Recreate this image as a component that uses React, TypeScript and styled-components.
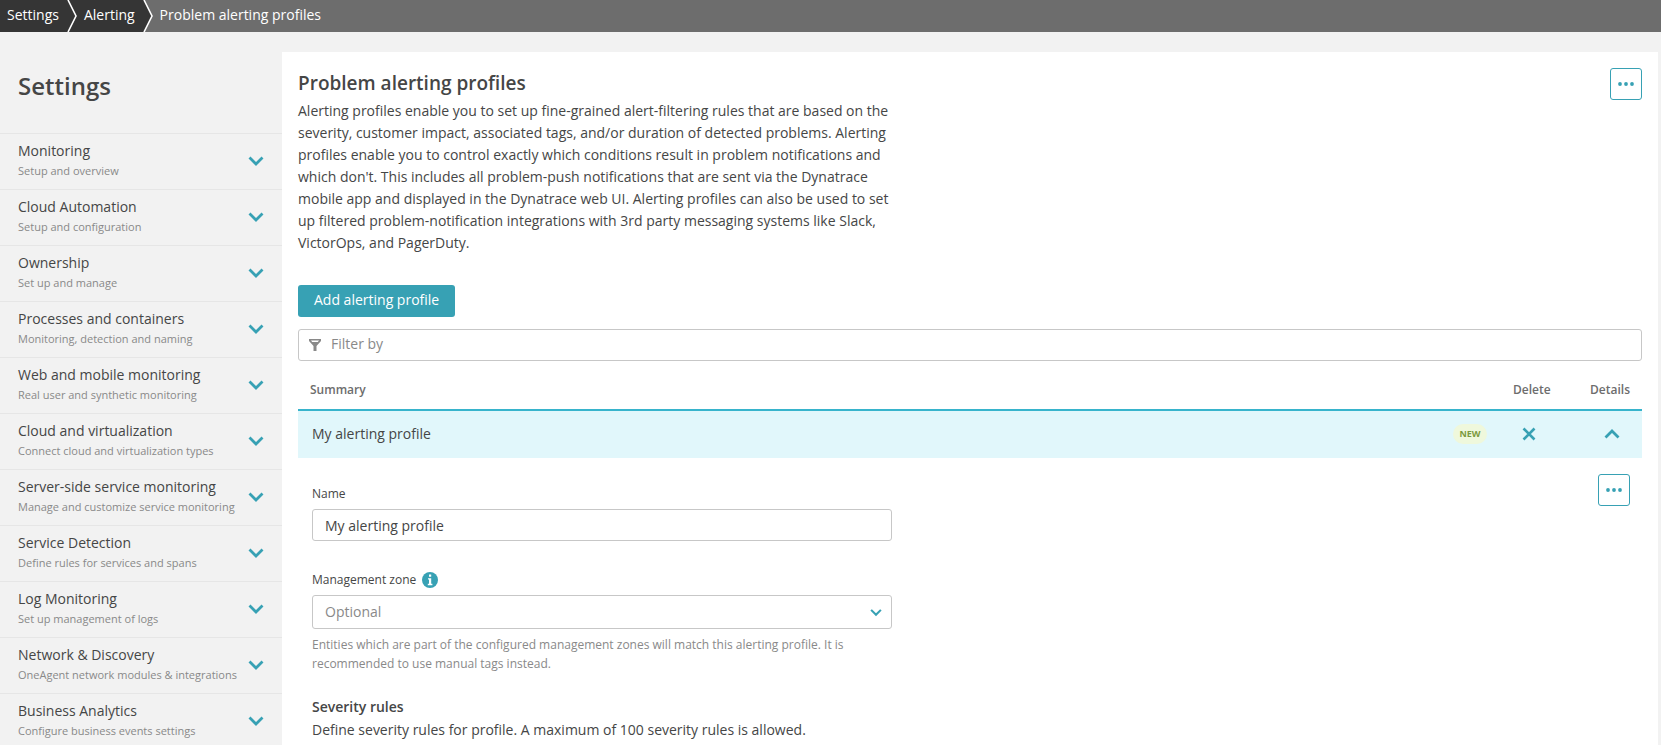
import React from 'react';
import styled, { createGlobalStyle } from 'styled-components';

const GlobalStyle = createGlobalStyle`
  * { box-sizing: border-box; }
  html { scrollbar-width: none; }
  body {
    margin: 0;
    background: #f2f2f2;
    color: #454646;
    font: 400 14px/22px 'Open Sans', 'Noto Sans', sans-serif;
  }
  button, input, select { font: inherit; color: inherit; }
`;

const Page = styled.div`
  height: 100vh;
  display: flex;
  flex-direction: column;
  overflow: hidden;
`;

const Breadcrumbs = styled.nav`
  flex: none;
  display: flex;
  height: 32px;
  background: #6d6d6d;
  color: #fff;
`;

const Crumb = styled.a<{ $current?: boolean }>`
  display: flex;
  align-items: center;
  padding: 0 8px 2px 7px;
  background: ${p => (p.$current ? 'transparent' : '#353535')};
  color: inherit;
  text-decoration: none;
`;

const CrumbArrow = styled.svg`
  flex: none;
  width: 10px;
  height: 32px;
`;

const Body = styled.div`
  flex: 1;
  min-height: 0;
  display: flex;
  padding: 20px 3px 0 0;
`;

const Sidebar = styled.aside`
  flex: none;
  width: 282px;
`;

const SidebarTitle = styled.h2`
  margin: 0;
  padding: 18px 18px 31px;
  font-size: 24px;
  line-height: 32px;
  font-weight: 600;
`;

const MenuItem = styled.button`
  display: flex;
  align-items: center;
  width: 100%;
  height: 56px;
  padding: 0 18px 2px;
  border: 0;
  border-top: 1px solid #e6e6e6;
  background: none;
  text-align: left;
  cursor: pointer;
`;

const MenuText = styled.span`
  flex: 1;
  min-width: 0;
  white-space: nowrap;
`;

const MenuTitle = styled.span`
  display: block;
  line-height: 20px;
`;

const MenuSubtitle = styled.span`
  display: block;
  font-size: 11px;
  line-height: 20px;
  color: #898989;
`;

const Card = styled.main`
  flex: 1;
  min-width: 0;
  padding: 16px;
  background: #fff;
  overflow: hidden;
`;

const CardHeader = styled.header`
  display: flex;
  justify-content: space-between;
  align-items: flex-start;
`;

const Title = styled.h1`
  margin: 0;
  font-size: 19px;
  line-height: 30px;
  font-weight: 600;
`;

const Description = styled.p`
  margin: 0;
  padding: 2px 0 0;
  max-width: 604px;
`;

const MoreButton = styled.button`
  flex: none;
  display: grid;
  place-items: center;
  width: 32px;
  height: 32px;
  padding: 0;
  border: 1px solid #37a1b4;
  border-radius: 3px;
  background: #fff;
  cursor: pointer;
`;

const PrimaryButton = styled.button`
  display: block;
  height: 32px;
  margin-top: 31px;
  padding: 0 16px 2px;
  border: 0;
  border-radius: 3px;
  background: #37a1b4;
  color: #fff;
  font-weight: 500;
  cursor: pointer;
`;

const FilterBox = styled.label`
  display: flex;
  align-items: center;
  gap: 9px;
  height: 32px;
  margin-top: 12px;
  padding: 0 9px;
  border: 1px solid #c7c7c7;
  border-radius: 3px;
`;

const FilterInput = styled.input`
  flex: 1;
  min-width: 0;
  padding: 0 0 2px;
  border: 0;
  outline: 0;
  background: none;
  &::placeholder { color: #898989; opacity: 1; }
`;

const Table = styled.table`
  width: 100%;
  margin-top: 8px;
  border-collapse: collapse;
`;

const HeadCell = styled.th<{ $width?: number }>`
  width: ${p => (p.$width ? `${p.$width}px` : 'auto')};
  height: 41px;
  padding: 2px 12px 0;
  border-bottom: 2px solid #37b4cc;
  color: #6d6d6d;
  font-size: 12px;
  line-height: 18px;
  font-weight: 600;
  text-align: left;
`;

const ProfileCell = styled.td<{ $compact?: boolean }>`
  height: 48px;
  padding: 0 ${p => (p.$compact ? 12 : 14)}px 2px;
  background: #e1f7fb;
`;

const Badge = styled.span`
  display: block;
  width: 34px;
  height: 20px;
  border-radius: 10px;
  background: #eff8dc;
  color: #7c9a3e;
  font-size: 9px;
  line-height: 19px;
  font-weight: 700;
  text-align: center;
`;

const IconButton = styled.button<{ $end?: boolean }>`
  display: grid;
  place-items: center;
  width: 32px;
  height: 32px;
  margin-left: ${p => (p.$end ? 'auto' : 0)};
  padding: 0;
  border: 0;
  background: none;
  cursor: pointer;
`;

const DetailsCell = styled.td`
  padding: 16px 12px 0 14px;
`;

const DetailsLayout = styled.div`
  display: flex;
  justify-content: space-between;
  align-items: flex-start;
`;

const Form = styled.form`
  flex: 0 1 580px;
  padding-top: 10px;
`;

const Field = styled.div<{ $gap: number }>`
  margin-bottom: ${p => p.$gap}px;
`;

const FieldLabel = styled.label`
  display: flex;
  align-items: center;
  gap: 6px;
  height: 20px;
  margin-bottom: 5px;
  font-size: 12px;
  line-height: 18px;
`;

const TextInput = styled.input`
  display: block;
  width: 100%;
  height: 32px;
  padding: 0 12px;
  border: 1px solid #c7c7c7;
  border-radius: 3px;
  background: #fff;
`;

const SelectWrap = styled.div`
  display: grid;
  align-items: center;
  > * { grid-area: 1 / 1; }
  > svg { justify-self: end; margin-right: 10px; pointer-events: none; }
`;

const Select = styled.select`
  width: 100%;
  height: 34px;
  padding: 0 12px;
  border: 1px solid #c7c7c7;
  border-radius: 3px;
  background: #fff;
  color: #898989;
  appearance: none;
`;

const Help = styled.p`
  margin: 6px 0 0;
  font-size: 12px;
  line-height: 19px;
  color: #898989;
`;

const SectionTitle = styled.h3`
  margin: 0;
  font-size: 14px;
  line-height: 24px;
  font-weight: 600;
`;

const SectionText = styled.p`
  margin: 0;
`;

const Chevron = ({ up, small }: { up?: boolean; small?: boolean }) => (
  <svg width={small ? 12 : 16} height={small ? 9 : 12} viewBox="0 0 16 12" fill="none" stroke="#37a1b4" strokeWidth="2.8" aria-hidden="true">
    <path d={up ? 'M1.5 9.5 8 3l6.5 6.5' : 'M1.5 2.5 8 9l6.5-6.5'} />
  </svg>
);

const Dots = () => (
  <svg width="16" height="4" viewBox="0 0 16 4" fill="#37a1b4" aria-hidden="true">
    <circle cx="2" cy="2" r="1.9" />
    <circle cx="8" cy="2" r="1.9" />
    <circle cx="14" cy="2" r="1.9" />
  </svg>
);

const Arrow = ({ last }: { last?: boolean }) => (
  <CrumbArrow viewBox="0 0 10 32" aria-hidden="true">
    <rect width="10" height="32" fill={last ? '#6d6d6d' : '#353535'} />
    <path d="M0 0h1l8 16-8 16H0z" fill="#353535" />
    <path d="M1 0l8 16-8 16" fill="none" stroke="#fff" strokeWidth="1.6" />
  </CrumbArrow>
);

const menu = [
  ['Monitoring', 'Setup and overview'],
  ['Cloud Automation', 'Setup and configuration'],
  ['Ownership', 'Set up and manage'],
  ['Processes and containers', 'Monitoring, detection and naming'],
  ['Web and mobile monitoring', 'Real user and synthetic monitoring'],
  ['Cloud and virtualization', 'Connect cloud and virtualization types'],
  ['Server-side service monitoring', 'Manage and customize service monitoring'],
  ['Service Detection', 'Define rules for services and spans'],
  ['Log Monitoring', 'Set up management of logs'],
  ['Network & Discovery', 'OneAgent network modules & integrations'],
  ['Business Analytics', 'Configure business events settings'],
];

export default function App() {
  return (
    <Page>
      <GlobalStyle />
      <Breadcrumbs aria-label="Breadcrumb">
        <Crumb href="#settings">Settings</Crumb>
        <Arrow />
        <Crumb href="#alerting">Alerting</Crumb>
        <Arrow last />
        <Crumb href="#profiles" $current aria-current="page">Problem alerting profiles</Crumb>
      </Breadcrumbs>
      <Body>
        <Sidebar>
          <SidebarTitle>Settings</SidebarTitle>
          {menu.map(([title, subtitle]) => (
            <MenuItem key={title} type="button" aria-expanded="false">
              <MenuText>
                <MenuTitle>{title}</MenuTitle>
                <MenuSubtitle>{subtitle}</MenuSubtitle>
              </MenuText>
              <Chevron />
            </MenuItem>
          ))}
        </Sidebar>
        <Card>
          <CardHeader>
            <div>
              <Title>Problem alerting profiles</Title>
              <Description>
                Alerting profiles enable you to set up fine-grained alert-filtering rules that are based on the
                severity, customer impact, associated tags, and/or duration of detected problems. Alerting
                profiles enable you to control exactly which conditions result in problem notifications and
                which don't. This includes all problem-push notifications that are sent via the Dynatrace
                mobile app and displayed in the Dynatrace web UI. Alerting profiles can also be used to set
                up filtered problem-notification integrations with 3rd party messaging systems like Slack,
                VictorOps, and PagerDuty.
              </Description>
            </div>
            <MoreButton type="button" aria-label="More actions"><Dots /></MoreButton>
          </CardHeader>
          <PrimaryButton type="button">Add alerting profile</PrimaryButton>
          <FilterBox>
            <svg width="14" height="14" viewBox="0 0 14 14" aria-hidden="true">
              <path fill="#898989" fillRule="evenodd" d="M1 1h12v2L8.5 8v5h-3V8L1 3zM3 2.5 4.2 4h5.6L11 2.5z" />
            </svg>
            <FilterInput type="text" placeholder="Filter by" aria-label="Filter by" />
          </FilterBox>
          <Table>
            <thead>
              <tr>
                <HeadCell scope="col">Summary</HeadCell>
                <HeadCell $width={61} aria-label="Status" />
                <HeadCell $width={77} scope="col">Delete</HeadCell>
                <HeadCell $width={63} scope="col">Details</HeadCell>
              </tr>
            </thead>
            <tbody>
              <tr>
                <ProfileCell>My alerting profile</ProfileCell>
                <ProfileCell><Badge>NEW</Badge></ProfileCell>
                <ProfileCell $compact>
                  <IconButton type="button" aria-label="Delete">
                    <svg width="14" height="14" viewBox="0 0 14 14" stroke="#37a1b4" strokeWidth="2.6" aria-hidden="true">
                      <path d="M1.5 1.5l11 11M12.5 1.5l-11 11" />
                    </svg>
                  </IconButton>
                </ProfileCell>
                <ProfileCell>
                  <IconButton $end type="button" aria-label="Hide details" aria-expanded="true"><Chevron up /></IconButton>
                </ProfileCell>
              </tr>
              <tr>
                <DetailsCell colSpan={4}>
                  <DetailsLayout>
                    <Form>
                      <Field $gap={29}>
                        <FieldLabel htmlFor="name">Name</FieldLabel>
                        <TextInput id="name" type="text" defaultValue="My alerting profile" />
                      </Field>
                      <Field $gap={22}>
                        <FieldLabel htmlFor="zone">
                          Management zone
                          <svg width="16" height="16" viewBox="0 0 16 16" aria-hidden="true">
                            <circle cx="8" cy="8" r="8" fill="#37a1b4" />
                            <path fill="#fff" d="M7 2.5h2.2v2.2H7zM6 6.2h3.2v5.6h1.2v1.4H5.8v-1.4H7V7.6H6z" />
                          </svg>
                        </FieldLabel>
                        <SelectWrap>
                          <Select id="zone"><option>Optional</option></Select>
                          <Chevron small />
                        </SelectWrap>
                        <Help>
                          Entities which are part of the configured management zones will match this alerting profile. It is
                          recommended to use manual tags instead.
                        </Help>
                      </Field>
                      <SectionTitle>Severity rules</SectionTitle>
                      <SectionText>Define severity rules for profile. A maximum of 100 severity rules is allowed.</SectionText>
                    </Form>
                    <MoreButton type="button" aria-label="More profile actions"><Dots /></MoreButton>
                  </DetailsLayout>
                </DetailsCell>
              </tr>
            </tbody>
          </Table>
        </Card>
      </Body>
    </Page>
  );
}
